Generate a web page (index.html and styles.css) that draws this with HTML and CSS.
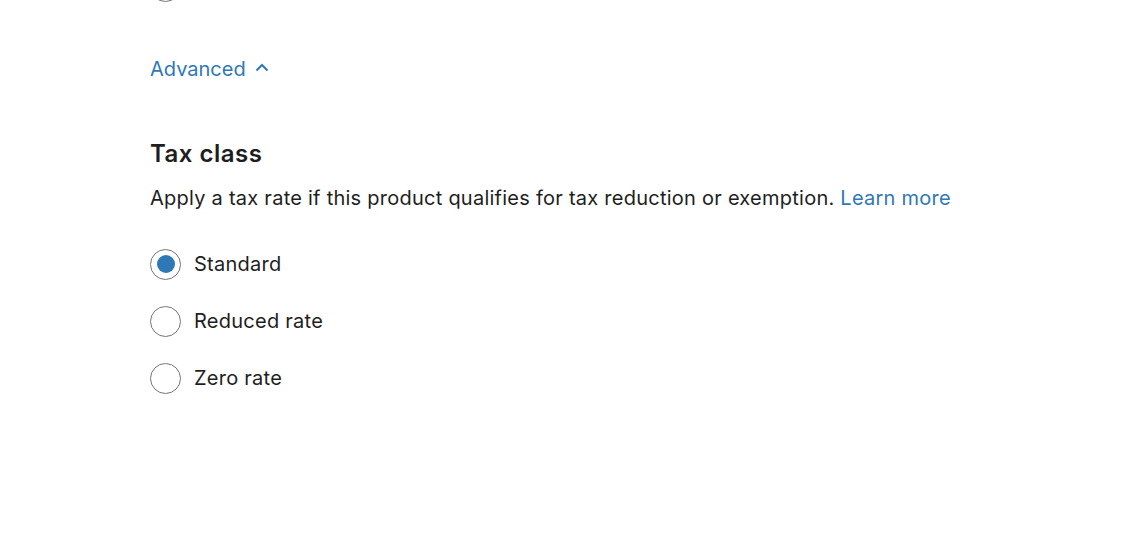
FILE: index.html
```html
<!DOCTYPE html>
<html lang="en">
<head>
<meta charset="utf-8">
<title>Tax class</title>
<link rel="stylesheet" href="styles.css">
</head>
<body>
<div class="page">
  <div class="prev-radio"></div>
  <button class="advanced" type="button">
    <span>Advanced</span>
    <svg class="chev" width="16" height="16" viewBox="0 0 16 16" aria-hidden="true"><path d="M2.5 10.5 L8 5 L13.5 10.5" fill="none" stroke="currentColor" stroke-width="2"/></svg>
  </button>
  <section class="tax">
    <h2 class="title">Tax class</h2>
    <p class="desc">Apply a tax rate if this product qualifies for tax reduction or exemption. <a href="#" class="link">Learn more</a></p>
    <div class="options">
      <label class="opt"><span class="radio checked"></span><span>Standard</span></label>
      <label class="opt"><span class="radio"></span><span>Reduced rate</span></label>
      <label class="opt"><span class="radio"></span><span>Zero rate</span></label>
    </div>
  </section>
</div>
</body>
</html>
```

FILE: styles.css
```css
html, body {
  margin: 0;
  padding: 0;
  background: #fff;
}
body {
  font-family: Inter, "Noto Sans", sans-serif;
  color: #1e1e1e;
  height: 542px;
  overflow: hidden;
}
.page {
  padding-left: 150px;
  position: relative;
  display: flow-root;
}
.prev-radio {
  position: absolute;
  left: 150px;
  top: -29px;
  width: 29px;
  height: 29px;
  border: 1.5px solid #757575;
  border-radius: 50%;
}
.advanced {
  margin-top: 55px;
  display: flex;
  align-items: center;
  gap: 8px;
  padding: 0;
  border: 0;
  background: none;
  font-family: inherit;
  font-size: 20px;
  color: #2f78b7;
  line-height: 28px;
  cursor: pointer;
}
.chev { display: block; margin-top: -2px; }
.tax { margin-top: 55px; }
.title {
  margin: 0;
  font-size: 24px;
  font-weight: 600;
  letter-spacing: 0.5px;
  line-height: 32px;
}
.desc {
  margin: 14px 0 0;
  font-size: 20px;
  letter-spacing: 0.25px;
  line-height: 28px;
}
.link { color: #2f78b7; text-decoration: none; }
.options {
  margin-top: 36px;
  display: flex;
  flex-direction: column;
  gap: 25px;
}
.opt {
  display: flex;
  align-items: center;
  gap: 13px;
  font-size: 20px;
  letter-spacing: 0.25px;
  line-height: 32px;
}
.radio {
  width: 29px;
  height: 29px;
  border: 1.5px solid #757575;
  border-radius: 50%;
  display: flex;
  align-items: center;
  justify-content: center;
  flex: none;
}
.radio.checked::after {
  content: "";
  width: 18px;
  height: 18px;
  border-radius: 50%;
  background: #2f78b7;
}
```
